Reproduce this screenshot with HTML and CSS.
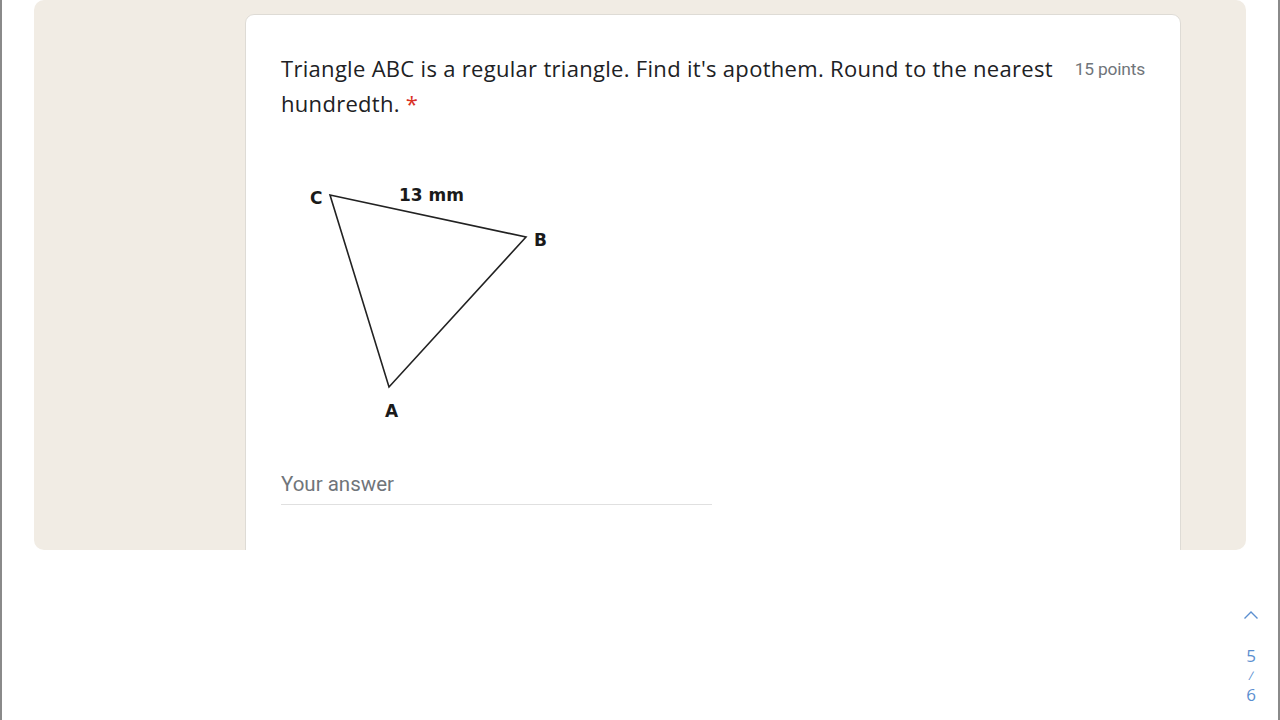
FILE: index.html
```html
<!DOCTYPE html>
<html>
<head>
<meta charset="utf-8">
<link rel="stylesheet" href="styles.css">
</head>
<body>
<div class="frame">
  <div class="panel">
    <div class="card">
      <div class="qhead">
        <div class="qtext">Triangle ABC is a regular triangle. Find it's apothem. Round to the nearest hundredth.<span class="req"> *</span></div>
        <div class="points">15 points</div>
      </div>
      <div class="figure">
        <svg width="300" height="250" viewBox="0 0 300 250">
          <polygon points="49,21 245,63 108,213" fill="none" stroke="#222" stroke-width="1.6" stroke-linejoin="miter"/>
          <text x="29" y="30" class="lbl">C</text>
          <text x="118" y="27" class="lbl">13 mm</text>
          <text x="253" y="72" class="lbl">B</text>
          <text x="104" y="243" class="lbl">A</text>
        </svg>
      </div>
      <div class="answer">Your answer</div>
    </div>
  </div>
  <div class="pager">
    <svg class="chev" width="16" height="10" viewBox="0 0 16 10"><path d="M1.5 8.5 L8 2 L14.5 8.5" fill="none" stroke="#5b8fd0" stroke-width="1.4"/></svg>
    <div class="pnum">5</div>
    <div class="slash">/</div>
    <div class="pnum">6</div>
  </div>
</div>
</body>
</html>
```
FILE: styles.css
```css
html, body { margin: 0; padding: 0; background: #fff; }
.frame {
  position: relative;
  width: 1280px;
  height: 720px;
  box-sizing: border-box;
  border-left: 2px solid #8a8a8a;
  border-right: 2px solid #8a8a8a;
  overflow: hidden;
}
.panel {
  margin-left: 32px;
  width: 1212px;
  height: 550px;
  background: #f1ece4;
  border-radius: 10px;
  overflow: hidden;
  box-sizing: border-box;
  padding-top: 14px;
  padding-left: 211px;
}
.card {
  width: 936px;
  height: 560px;
  box-sizing: border-box;
  background: #fff;
  border: 1px solid #dedbd5;
  border-radius: 9px 9px 0 0;
  padding: 36px 35px 0 35px;
  font-family: Roboto, "Liberation Sans", sans-serif;
}
.qhead {
  display: flex;
  align-items: flex-start;
  gap: 12px;
}
.qtext {
  flex: 1;
  font-family: "Open Sans", Roboto, sans-serif;
  font-size: 22px;
  line-height: 35px;
  color: #202124;
  letter-spacing: 0.3px;
}
.req { color: #d93025; }
.points {
  font-size: 17.4px;
  color: #70757a;
  line-height: 35px;
  padding-top: 1px;
  letter-spacing: -0.2px;
  white-space: nowrap;
}
.figure {
  margin-top: 53px;
  height: 250px;
}
.figure svg { display: block; }
.lbl {
  font-family: "DejaVu Sans", sans-serif;
  font-weight: bold;
  font-size: 17px;
  fill: #1a1a1a;
}
.answer {
  margin-top: 48px;
  width: 431px;
  font-size: 20.5px;
  color: #70757a;
  padding-bottom: 8px;
  border-bottom: 1px solid #e0e0e0;
}
.pager {
  position: absolute;
  right: 17px;
  top: 610px;
  width: 20px;
  display: flex;
  flex-direction: column;
  align-items: center;
  font-family: "Open Sans", "Liberation Sans", sans-serif;
  color: #5b8fd0;
}
.chev { display: block; margin-bottom: 26px; }
.pnum { font-size: 17px; line-height: 20px; }
.slash { font-size: 12px; line-height: 19px; transform: skewX(-10deg); }
```
